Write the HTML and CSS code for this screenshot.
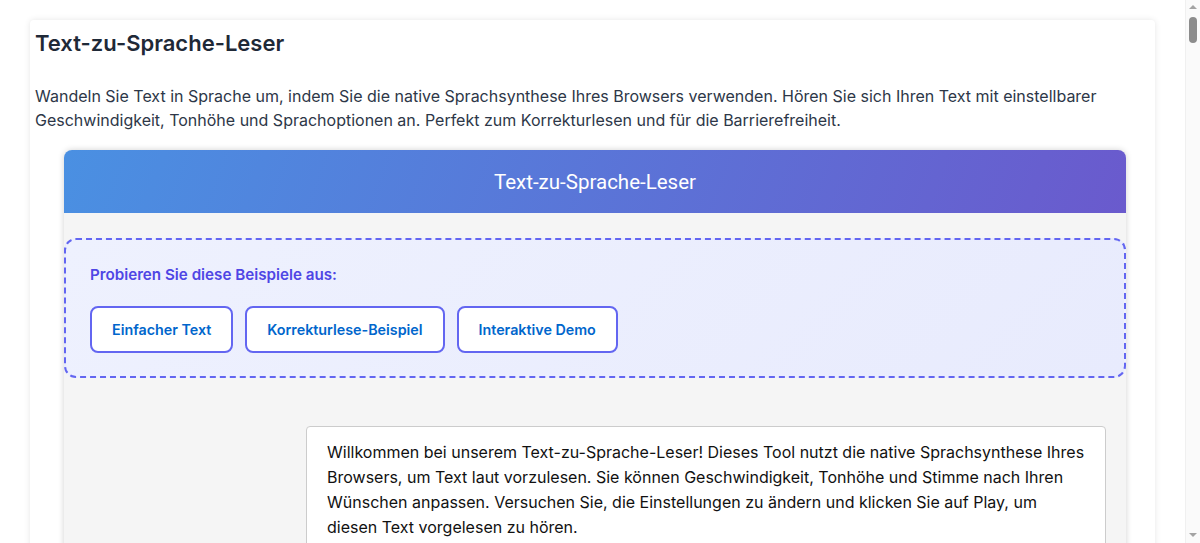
FILE: index.html
```html
<!DOCTYPE html>
<html lang="de">
<head>
<meta charset="utf-8">
<title>Text-zu-Sprache-Leser</title>
<link rel="stylesheet" href="styles.css">
</head>
<body>
<main class="page">
  <h1 class="title">Text-zu-Sprache-Leser</h1>
  <p class="intro">Wandeln Sie Text in Sprache um, indem Sie die native Sprachsynthese Ihres Browsers verwenden. Hören Sie sich Ihren Text mit einstellbarer Geschwindigkeit, Tonhöhe und Sprachoptionen an. Perfekt zum Korrekturlesen und für die Barrierefreiheit.</p>
  <section class="widget">
    <header class="widget-head">Text-zu-Sprache-Leser</header>
    <div class="widget-body">
      <div class="examples">
        <div class="examples-title">Probieren Sie diese Beispiele aus:</div>
        <div class="example-buttons">
          <button class="ex-btn">Einfacher Text</button>
          <button class="ex-btn">Korrekturlese-Beispiel</button>
          <button class="ex-btn">Interaktive Demo</button>
        </div>
      </div>
      <div class="editor-row">
        <div class="editor">Willkommen bei unserem Text-zu-Sprache-Leser! Dieses Tool nutzt die native Sprachsynthese Ihres Browsers, um Text laut vorzulesen. Sie können Geschwindigkeit, Tonhöhe und Stimme nach Ihren Wünschen anpassen. Versuchen Sie, die Einstellungen zu ändern und klicken Sie auf Play, um diesen Text vorgelesen zu hören.</div>
      </div>
    </div>
  </section>
</main>
<div class="scrollbar" aria-hidden="true">
  <span class="sb-arrow sb-up"></span>
  <span class="sb-thumb"></span>
  <span class="sb-arrow sb-down"></span>
</div>
</body>
</html>
```

FILE: styles.css
```css
* { box-sizing: border-box; }
html, body { margin: 0; padding: 0; background: #ffffff; }
body {
  font-family: Inter, "Noto Sans", sans-serif;
  color: #2d3748;
  padding: 20px 45px 40px 30px;
}
.page {
  background: #ffffff;
  box-shadow: 0 0 6px rgba(0,0,0,0.10);
  border-radius: 4px;
  padding: 8px 5px 30px 5px;
}
.title {
  margin: 0;
  font-size: 22px;
  font-weight: 600;
  line-height: 30px;
  color: #1f2937;
}
.intro {
  margin: 26px 0 18px 0;
  font-size: 16px;
  line-height: 24px;
  color: #2d3748;
}
.widget {
  margin: 0 24px 0 29px;
  border-radius: 8px;
  background: #f5f5f5;
  box-shadow: 0 0 6px rgba(0,0,0,0.18);
  overflow: hidden;
}
.widget-head {
  height: 63px;
  display: flex;
  align-items: center;
  justify-content: center;
  background: linear-gradient(110deg, #4a90e2 0%, #6a5acd 100%);
  color: #ffffff;
  font-family: Roboto, "Liberation Sans", sans-serif;
  font-size: 20.5px;
  font-weight: 400;
}
.widget-body {
  padding: 25px 0 40px 0;
}
.examples {
  border: 2px dashed #6366f1;
  border-radius: 12px;
  background: linear-gradient(135deg, #eef1fe 0%, #e8ebfd 100%);
  padding: 24px 24px 23px 24px;
}
.examples-title {
  color: #4f46e5;
  font-size: 15.2px;
  font-weight: 600;
  line-height: 22px;
}
.example-buttons {
  display: flex;
  gap: 12px;
  margin-top: 20px;
}
.ex-btn {
  height: 47px;
  padding: 0 20px;
  background: #ffffff;
  border: 2px solid #6366f1;
  border-radius: 8px;
  color: #0066cc;
  font-family: Inter, "Noto Sans", sans-serif;
  font-size: 14.3px;
  font-weight: 600;
}
.editor-row {
  display: flex;
  justify-content: flex-end;
  padding: 48px 20px 0 0;
}
.editor {
  width: 800px;
  min-height: 200px;
  background: #ffffff;
  border: 1px solid #cccccc;
  border-radius: 4px;
  padding: 13px 20px 12px 20px;
  font-size: 16px;
  line-height: 25px;
  color: #111111;
}
.scrollbar {
  position: fixed;
  top: 0;
  right: 0;
  width: 15px;
  height: 100%;
  background: #fafafa;
  border-left: 1px solid #f0f0f0;
}
.sb-thumb {
  position: absolute;
  top: 17px;
  left: 3px;
  width: 8px;
  height: 26px;
  border-radius: 4px;
  background: #8c8c8c;
}
.sb-arrow {
  position: absolute;
  left: 3px;
  width: 0;
  height: 0;
  border-left: 4px solid transparent;
  border-right: 4px solid transparent;
}
.sb-up {
  top: 5px;
  border-bottom: 4px solid #a3a3a3;
}
.sb-down {
  bottom: 6px;
  border-top: 4px solid #a3a3a3;
}
```
